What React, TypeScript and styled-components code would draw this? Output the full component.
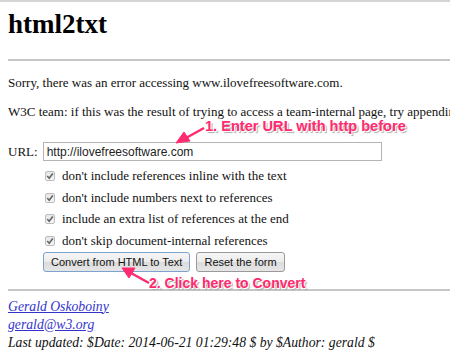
import styled, { createGlobalStyle } from "styled-components";

const GlobalStyle = createGlobalStyle`
  html, body {
    margin: 0;
    padding: 0;
    background: #fff;
  }
  body {
    font-family: "Liberation Serif", "Times New Roman", serif;
    font-size: 13px;
    color: #111;
    overflow: hidden;
  }
`;

const options = [
  "don't include references inline with the text",
  "don't include numbers next to references",
  "include an extra list of references at the end",
  "don't skip document-internal references",
];

const Check = () => (
  <CheckBox>
    <svg width="8" height="8" viewBox="0 0 8 8">
      <path d="M1.2 4 L3.2 6.2 L6.8 1.4" fill="none" stroke="#666" strokeWidth="1.6" />
    </svg>
  </CheckBox>
);

export default function App() {
  return (
    <Page>
      <GlobalStyle />
      <TopBar />
      <Content>
        <Title>html2txt</Title>
        <Rule />
        <Para>Sorry, there was an error accessing www.ilovefreesoftware.com.</Para>
        <Para>
          W3C team: if this was the result of trying to access a team-internal page, try appending
          ?reauth=1 to the URL.
        </Para>
        <Form>
          <UrlRow>
            URL:
            <UrlInput defaultValue="http://ilovefreesoftware.com" />
          </UrlRow>
          <Options>
            {options.map((o) => (
              <Option key={o}>
                <Check />
                {o}
              </Option>
            ))}
          </Options>
          <Buttons>
            <Button $focused>Convert from HTML to Text</Button>
            <Button>Reset the form</Button>
          </Buttons>
        </Form>
        <Rule />
        <Address>
          <Link href="#">Gerald Oskoboiny</Link>
          <Link href="#">gerald@w3.org</Link>
          <span>Last updated: $Date: 2014-06-21 01:29:48 $ by $Author: gerald $</span>
        </Address>
      </Content>

      <Note $x={205} $y={118} $size={14.6}>1. Enter URL with http before</Note>
      <Note $x={149} $y={275} $size={14}>2. Click here to Convert</Note>
      <Arrows width="450" height="354" viewBox="0 0 450 354">
        <g fill="#ff2a70" stroke="#ff2a70">
          <line x1="204" y1="128" x2="186" y2="138" strokeWidth="2.5" />
          <polygon points="176,143 184,132 190,141" strokeWidth="1" />
          <line x1="149" y1="283" x2="131" y2="273" strokeWidth="2.5" />
          <polygon points="122,268 135,268 129,278" strokeWidth="1" />
        </g>
      </Arrows>
    </Page>
  );
}

const Page = styled.div`
  position: relative;
  width: 450px;
  height: 354px;
  overflow: hidden;
`;

const TopBar = styled.div`
  height: 2px;
  background: #d4d4d4;
`;

const Content = styled.div`
  padding: 0 0 0 8px;
`;

const Title = styled.h1`
  margin: 6px 0 19px;
  font-size: 27px;
  line-height: 32px;
  font-weight: bold;
  color: #000;
`;

const Rule = styled.hr`
  margin: 0;
  height: 0;
  border: none;
  border-top: 2px solid #c6c6c6;
`;

const Para = styled.p`
  margin: 14px 0 0;
  line-height: 15px;
  white-space: nowrap;
`;

const Form = styled.form`
  margin: 0;
`;

const UrlRow = styled.label`
  display: flex;
  align-items: center;
  gap: 5px;
  margin: 23px 0 0 0;
  font-size: 13px;
`;

const UrlInput = styled.input`
  width: 339px;
  height: 19px;
  box-sizing: border-box;
  border: 1px solid #b4b4b4;
  padding: 1px 3px;
  font-family: "Liberation Sans", Arial, sans-serif;
  font-size: 12px;
  color: #222;
  outline: none;
`;

const Options = styled.div`
  display: flex;
  flex-direction: column;
  gap: 7.5px;
  margin: 8px 0 0 37px;
`;

const Option = styled.label`
  display: flex;
  align-items: center;
  gap: 7px;
  height: 14px;
  font-size: 13px;
  white-space: nowrap;
`;

const CheckBox = styled.span`
  width: 10px;
  height: 10px;
  box-sizing: border-box;
  border: 1px solid #bdbdbd;
  border-radius: 2px;
  background: linear-gradient(#e6e6e6, #f6f6f6);
  display: flex;
  align-items: center;
  justify-content: center;
`;

const Buttons = styled.div`
  display: flex;
  gap: 6px;
  margin: 4px 0 17px 35px;
`;

const Button = styled.button<{ $focused?: boolean }>`
  height: 20px;
  padding: 0 7px;
  border: 1px solid ${(p) => (p.$focused ? "#7da2ce" : "#9a9a9a")};
  border-radius: 3px;
  background: linear-gradient(#f6f6f6 0%, #ececec 50%, #dcdcdc 51%, #e6e6e6 100%);
  font-family: "Liberation Sans", Arial, sans-serif;
  font-size: 11px;
  color: #111;
`;

const Address = styled.address`
  display: flex;
  flex-direction: column;
  margin-top: 7px;
  font-style: italic;
  font-size: 13.7px;
  line-height: 18px;
  white-space: nowrap;
`;

const Link = styled.a`
  color: #3333cc;
  text-decoration: underline;
  width: fit-content;
`;

const Note = styled.div<{ $x: number; $y: number; $size: number }>`
  position: absolute;
  left: ${(p) => p.$x}px;
  top: ${(p) => p.$y}px;
  font-family: "Liberation Sans", Arial, sans-serif;
  font-weight: bold;
  font-size: ${(p) => p.$size}px;
  color: #ff2a70;
  text-shadow: 1px 1px 0 #fff, 2px 2px 1px #aaa;
  white-space: nowrap;
`;

const Arrows = styled.svg`
  position: absolute;
  left: 0;
  top: 0;
  pointer-events: none;
`;
